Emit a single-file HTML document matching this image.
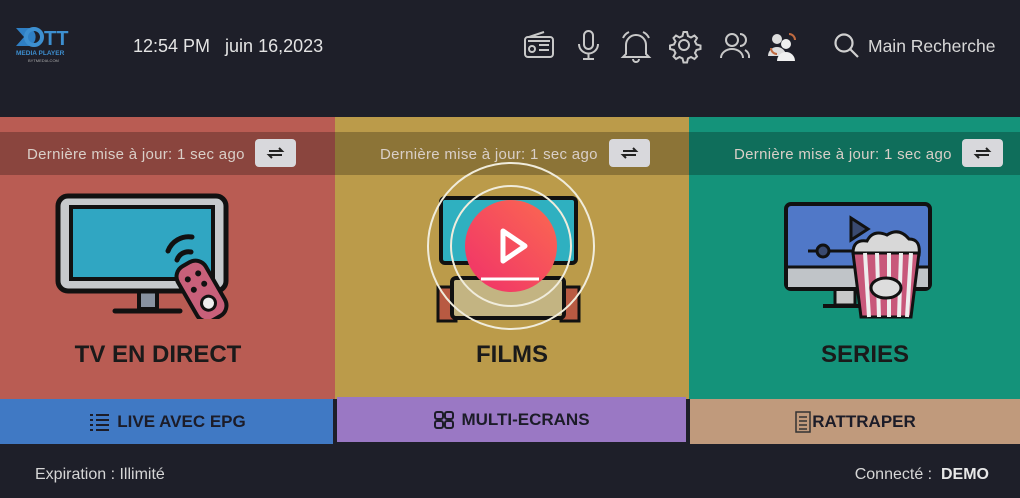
<!DOCTYPE html>
<html><head><meta charset="utf-8"><style>
*{margin:0;padding:0;box-sizing:border-box}
body{width:1020px;height:498px;background:#1e1f29;font-family:"Liberation Sans",sans-serif;position:relative;overflow:hidden;color:#ddd}
.abs{position:absolute}
.col{position:absolute;top:117px;height:282px}
.bar{position:absolute;left:0;right:0;top:15px;height:43px;background:rgba(0,0,0,0.25)}
.upd{position:absolute;top:29px;font-size:15px;color:#d9cfc8;letter-spacing:0.3px}
.btn{position:absolute;top:22px;width:41px;height:28px;background:#d8d8dc;border-radius:4px}
.title{position:absolute;top:341px;font-size:24px;font-weight:bold;color:#1a1a1a;text-align:center}
.bb{position:absolute;font-size:17px;font-weight:bold;color:#1c1c28;display:flex;align-items:center;justify-content:center;gap:6px}
</style></head><body>
<svg class="abs" style="left:14px;top:26px" width="64" height="40" viewBox="0 0 64 40">
<path d="M2 2 L16 2 A10 10 0 0 1 16 20 L2 20 L10 11 Z" fill="#2f7fc4"/>
<circle cx="20" cy="11" r="8" fill="none" stroke="#3d8fd0" stroke-width="4"/>
<text x="30" y="19" font-family="Liberation Sans" font-weight="bold" font-size="20" fill="#3d8fd0">TT</text>
<text x="2" y="29" font-family="Liberation Sans" font-weight="bold" font-size="6.5" fill="#3d8fd0">MEDIA PLAYER</text>
<text x="14" y="36" font-family="Liberation Sans" font-size="4" fill="#aaa">BYTMEDIA.COM</text>
</svg>
<div class="abs" style="left:133px;top:36px;font-size:18px;color:#e4e4e4">12:54 PM&nbsp;&nbsp;&nbsp;juin 16,2023</div>
<svg class="abs" style="left:520px;top:28px" width="300" height="36" viewBox="0 0 300 36" fill="none" stroke="#c8c8c8" stroke-width="2">
<rect x="5" y="9" width="28" height="20" rx="3"/><line x1="9" y1="9" x2="24" y2="4"/><circle cx="12" cy="21" r="3"/><line x1="19" y1="17" x2="29" y2="17"/><line x1="19" y1="22" x2="29" y2="22"/><line x1="8" y1="13" x2="30" y2="13"/>
<rect x="64" y="3" width="9" height="18" rx="4.5"/><path d="M59 16 a9.5 9.5 0 0 0 19 0"/><line x1="68.5" y1="25" x2="68.5" y2="31"/><line x1="63" y1="31" x2="74" y2="31"/>
<path d="M106 26 v-9 a10 10 0 0 1 20 0 v9 l3 3 h-26 z"/><path d="M113 31 a3 3 0 0 0 6 0"/><path d="M103 10 a12 12 0 0 1 6 -6 M129 10 a12 12 0 0 0 -6 -6"/>
<circle cx="164" cy="17" r="5"/><path d="M164 4 l3 0 1 4 3 1.5 3.5 -2 2.5 2.5 -2 3.5 1.5 3 4 1 0 3.5 -4 1 -1.5 3 2 3.5 -2.5 2.5 -3.5 -2 -3 1.5 -1 4 h-3.5 l-1 -4 -3 -1.5 -3.5 2 -2.5 -2.5 2 -3.5 -1.5 -3 -4 -1 v-3.5 l4 -1 1.5 -3 -2 -3.5 2.5 -2.5 3.5 2 3 -1.5 1 -4z"/>
<circle cx="212" cy="12" r="6"/><path d="M201 30 a11 9 0 0 1 22 0"/><path d="M220 6 a6 6 0 0 1 0 12 M225 22 a9 8 0 0 1 4 8"/>
</svg>
<svg class="abs" style="left:767px;top:30px" width="34" height="32" viewBox="0 0 34 32">
<circle cx="10" cy="9" r="5" fill="#ddd"/><path d="M1 26 a9 9 0 0 1 18 0z" fill="#ddd"/>
<circle cx="19" cy="14" r="5" fill="#f0f0f0"/><path d="M10 31 a9 9 0 0 1 18 0z" fill="#f0f0f0"/>
<path d="M22 4 a6 6 0 0 1 6 6" stroke="#c06a40" stroke-width="2" fill="none"/><path d="M4 18 a6 6 0 0 0 6 6" stroke="#c06a40" stroke-width="2" fill="none"/>
</svg>
<svg class="abs" style="left:833px;top:32px" width="28" height="28" viewBox="0 0 28 28" fill="none" stroke="#d0d0d0" stroke-width="2.2"><circle cx="11" cy="11" r="8.5"/><line x1="17.5" y1="17.5" x2="25" y2="25"/></svg>
<div class="abs" style="left:868px;top:36px;font-size:17.5px;color:#d8d8d8">Main Recherche</div>

<div class="col" style="left:0;width:335px;background:#b95c53">
<div class="bar"></div>
<div class="upd" style="left:27px">Dernière mise à jour: 1 sec ago</div>
<div class="btn" style="left:255px"></div>
</div>
<div class="col" style="left:335px;width:354px;background:#bb9b4a">
<div class="bar"></div>
<div class="upd" style="left:45px">Dernière mise à jour: 1 sec ago</div>
<div class="btn" style="left:274px"></div>
</div>
<div class="col" style="left:689px;width:331px;background:#14937a">
<div class="bar"></div>
<div class="upd" style="left:45px">Dernière mise à jour: 1 sec ago</div>
<div class="btn" style="left:273px"></div>
</div>
<svg class="abs" style="left:0;top:0" width="1020" height="200" fill="none" stroke="#222" stroke-width="2">
<g transform="translate(266,143)"><path d="M3 8 h13 l-3 -3 M16 12 H3 l3 3"/></g>
<g transform="translate(620,143)"><path d="M3 8 h13 l-3 -3 M16 12 H3 l3 3"/></g>
<g transform="translate(973,143)"><path d="M3 8 h13 l-3 -3 M16 12 H3 l3 3"/></g>
</svg>

<svg class="abs" style="left:55px;top:193px" width="178" height="126" viewBox="0 0 178 126">
<rect x="84" y="96" width="18" height="20" fill="#8892a0" stroke="#111" stroke-width="4"/>
<line x1="60" y1="118" x2="125" y2="118" stroke="#111" stroke-width="5" stroke-linecap="round"/>
<rect x="3" y="3" width="168" height="95" rx="10" fill="#c6c9cc" stroke="#111" stroke-width="5"/>
<rect x="16" y="14" width="142" height="72" fill="#30a6c2" stroke="#111" stroke-width="4"/>
<path d="M113 58 a22 22 0 0 1 24 -14 M122 67 a12 12 0 0 1 14 -8" stroke="#111" stroke-width="5" fill="none" stroke-linecap="round"/>
<g transform="rotate(-30 143 92)"><rect x="127" y="68" width="32" height="62" rx="12" fill="#c8607a" stroke="#111" stroke-width="4"/>
<circle cx="137" cy="82" r="3" fill="#111"/><circle cx="149" cy="82" r="3" fill="#111"/><circle cx="137" cy="94" r="3" fill="#111"/><circle cx="149" cy="94" r="3" fill="#111"/>
<circle cx="143" cy="113" r="7" fill="#eee" stroke="#111" stroke-width="3"/></g>
</svg>
<svg class="abs" style="left:436px;top:193px" width="150" height="130" viewBox="0 0 150 130">
<rect x="5" y="5" width="135" height="65" rx="4" fill="#2fb0c0" stroke="#111" stroke-width="4"/>
<rect x="2" y="94" width="18" height="34" fill="#b85a42" stroke="#111" stroke-width="3"/>
<rect x="125" y="94" width="18" height="34" fill="#b85a42" stroke="#111" stroke-width="3"/>
<rect x="16" y="85" width="112" height="40" rx="4" fill="#c3b482" stroke="#111" stroke-width="4"/>
</svg>
<svg class="abs" style="left:425px;top:160px" width="172" height="172" viewBox="0 0 172 172">
<defs><linearGradient id="g" x1="1" y1="0" x2="0" y2="1"><stop offset="0" stop-color="#fb6a50"/><stop offset="1" stop-color="#f0306a"/></linearGradient></defs>
<circle cx="86" cy="86" r="83" fill="none" stroke="#f0ecdc" stroke-width="2"/>
<circle cx="86" cy="86" r="60" fill="none" stroke="#f0ecdc" stroke-width="2"/>
<circle cx="86" cy="86" r="46" fill="url(#g)"/>
<path d="M78 71 L100 86 L78 101 Z" fill="none" stroke="#fff" stroke-width="5" stroke-linejoin="round"/>
<line x1="56" y1="119" x2="114" y2="119" stroke="#fff" stroke-width="3"/>
</svg>
<svg class="abs" style="left:783px;top:201px" width="152" height="120" viewBox="0 0 152 120">
<rect x="52" y="80" width="20" height="24" fill="#c8c8c8" stroke="#111" stroke-width="3"/>
<line x1="40" y1="105" x2="82" y2="105" stroke="#111" stroke-width="4"/>
<rect x="3" y="3" width="144" height="85" rx="5" fill="#5078c8" stroke="#111" stroke-width="4"/>
<rect x="5" y="66" width="140" height="20" fill="#c0c4c8"/>
<line x1="3" y1="66" x2="147" y2="66" stroke="#111" stroke-width="3"/>
<path d="M68 17 L85 28 L68 39Z" fill="#3a4a70" stroke="#111" stroke-width="3"/>
<line x1="25" y1="50" x2="80" y2="50" stroke="#111" stroke-width="3"/><circle cx="40" cy="50" r="6" fill="#3a4a70" stroke="#111" stroke-width="3"/>
<path d="M70 52 q0 -14 14 -12 q6 -12 20 -6 q12 -8 22 4 q12 0 10 16 z" fill="#d8d8d8" stroke="#111" stroke-width="3"/>
<path d="M70 52 h66 l-8 64 h-50 z" fill="#c8587a" stroke="#111" stroke-width="3"/>
<path d="M82 52 l4 64 M94 52 l2 64 M106 52 v64 M118 52 l-2 64 M128 52 l-4 64" stroke="#eee" stroke-width="4"/>
<ellipse cx="103" cy="87" rx="15" ry="10" fill="#ddd" stroke="#111" stroke-width="3"/>
</svg>
<div class="title" style="left:0;width:316px">TV EN DIRECT</div>
<div class="title" style="left:335px;width:354px">FILMS</div>
<div class="title" style="left:689px;width:352px">SERIES</div>

<div class="bb" style="left:0;top:399px;width:333px;height:45px;background:#4079c4">
<svg width="24" height="20" viewBox="0 0 24 20" fill="none" stroke="#1c1c28" stroke-width="2"><path d="M3 3h3M3 8h3M3 13h3M3 18h3M9 3h13M9 8h13M9 13h13M9 18h13"/></svg>LIVE AVEC EPG</div>
<div class="bb" style="left:337px;top:397px;width:349px;height:45px;background:#9a78c4">
<svg width="22" height="20" viewBox="0 0 22 20" fill="none" stroke="#1c1c28" stroke-width="2"><rect x="2" y="2" width="8" height="7" rx="2"/><rect x="12" y="2" width="8" height="7" rx="2"/><rect x="2" y="11" width="8" height="7" rx="2"/><rect x="12" y="11" width="8" height="7" rx="2"/></svg>MULTI-ECRANS</div>
<div class="bb" style="left:690px;top:399px;width:330px;height:45px;background:#c09a7c;gap:0">
<svg width="18" height="22" viewBox="0 0 18 22" fill="none" stroke="#333" stroke-width="1.5"><rect x="2" y="1" width="14" height="20"/><path d="M5 6h8M5 10h8M5 14h8M5 18h8"/></svg>RATTRAPER</div>

<div class="abs" style="left:35px;top:466px;font-size:16px;color:#d6d6d6">Expiration : Illimité</div>
<div class="abs" style="right:31px;top:466px;font-size:16px;color:#d6d6d6">Connecté : &nbsp;<b style="color:#e8e8e8">DEMO</b></div>
</body></html>
